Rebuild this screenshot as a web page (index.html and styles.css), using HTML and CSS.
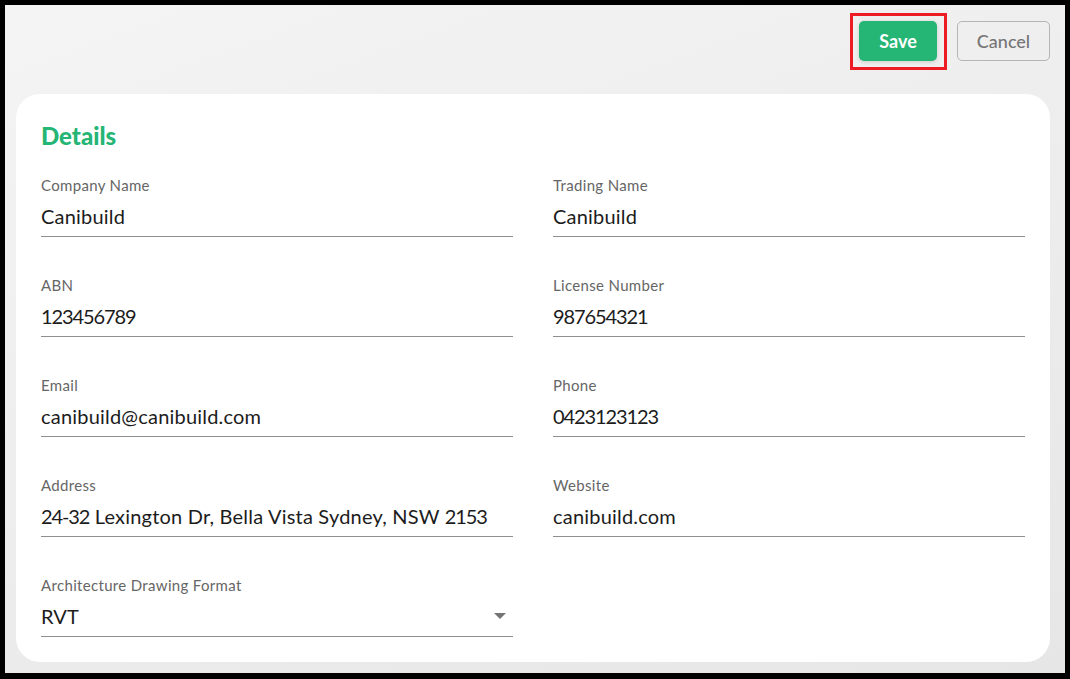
FILE: index.html
```html
<!DOCTYPE html>
<html lang="en">
<head>
<meta charset="utf-8">
<title>Details</title>
<link rel="stylesheet" href="styles.css">
</head>
<body>
<div class="frame">
  <header class="actions">
    <button class="btn btn-save" type="button">Save<span class="highlight"></span></button>
    <button class="btn btn-cancel" type="button">Cancel</button>
  </header>
  <main class="card">
    <h2 class="title">Details</h2>
    <div class="grid">
      <div class="field"><div class="label">Company Name</div><div class="value">Canibuild</div></div>
      <div class="field"><div class="label">Trading Name</div><div class="value">Canibuild</div></div>
      <div class="field"><div class="label">ABN</div><div class="value num">123456789</div></div>
      <div class="field"><div class="label">License Number</div><div class="value num">987654321</div></div>
      <div class="field"><div class="label">Email</div><div class="value">canibuild@canibuild.com</div></div>
      <div class="field"><div class="label">Phone</div><div class="value num">0423123123</div></div>
      <div class="field"><div class="label">Address</div><div class="value"><span class="num">24-32</span> Lexington Dr, Bella Vista Sydney, NSW <span class="num">2153</span></div></div>
      <div class="field"><div class="label">Website</div><div class="value">canibuild.com</div></div>
      <div class="field"><div class="label">Architecture Drawing Format</div><div class="value select">RVT<svg class="caret" width="12" height="6" viewBox="0 0 12 6"><path d="M0 0h12L6 6z" fill="#757575"/></svg></div></div>
    </div>
  </main>
</div>
</body>
</html>
```
FILE: styles.css
```css
* { box-sizing: border-box; }
html, body { margin: 0; height: 100%; }
body { font-family: "Lato", "Noto Sans", sans-serif; background: #000; }
.frame {
  width: 1070px; height: 679px;
  border: solid #000; border-width: 5px 5px 6px 5px;
  background: linear-gradient(160deg, #f4f4f4 0%, #e6e6e6 100%);
  padding: 16px 15px 0 11px;
}
.actions { display: flex; justify-content: flex-end; gap: 20px; height: 73px; }
.btn {
  height: 40px; border-radius: 5px; font: 600 18px "Lato", sans-serif;
  display: flex; align-items: center; justify-content: center; padding: 0;
}
.btn-save {
  position: relative; width: 78px; background: #25b574; color: #fff; border: 0;
  box-shadow: 0 1px 4px rgba(0,0,0,.15); font-weight: 700;
}
.btn-cancel { width: 93px; background: transparent; color: #757575; border: 1px solid #b5b5b5; font-weight: 500; }
.highlight {
  position: absolute; left: -9px; top: -8px; width: 97px; height: 57px;
  border: 3px solid #ed1c24;
}
.card {
  width: 1034px; height: 568px; background: #fff; border-radius: 24px;
  padding: 28px 25px 0;
}
.title { margin: 0; font: 900 24px/28px "Lato", sans-serif; color: #25b574; height: 47px; }
.grid { display: grid; grid-template-columns: 472px 472px; column-gap: 40px; grid-auto-rows: 100px; }
.field { height: 68px; border-bottom: 1px solid #8f8f8f; }
.label { font-size: 15px; line-height: 18px; color: #666; letter-spacing: .33px; padding-top: 7px; height: 33px; }
.value { font-size: 20px; line-height: 28px; color: #1c1c1c; letter-spacing: .2px; }
.num { letter-spacing: -1.1px; }
.select { display: flex; justify-content: space-between; align-items: center; padding-right: 7px; }
.caret { display: block; }
```
